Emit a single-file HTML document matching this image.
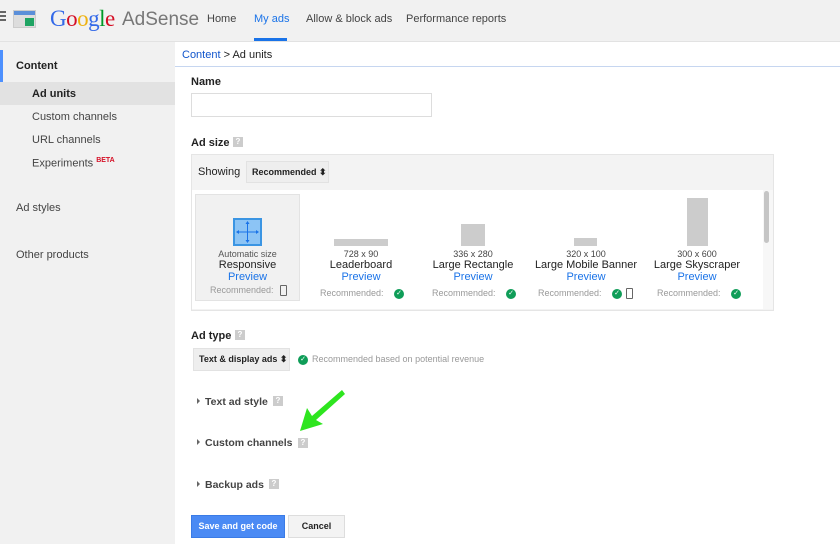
<!DOCTYPE html>
<html><head><style>
*{margin:0;padding:0;box-sizing:border-box}
body{width:840px;height:544px;overflow:hidden;font-family:"Liberation Sans",Arial,sans-serif;background:#f1f1f1;position:relative;font-size:11px;color:#222}
.a{position:absolute}
.blue{color:#1155cc}
.q{position:absolute;width:10px;height:10px;background:#ccc;color:#fff;font-size:8px;text-align:center;line-height:10px;font-weight:bold}
.cell{position:absolute;top:0;width:108px;text-align:center}
.cell .sz{font-size:9px;color:#444}
.cell .nm{font-size:11px;color:#222;line-height:12px}
.cell .pv{font-size:11px;color:#1a73e8;line-height:12px}
.rec{position:absolute;font-size:9px;color:#999}
.chk{display:inline-block;width:10px;height:10px;border-radius:50%;background:#0f9d58;color:#fff;font-size:7px;line-height:10px;text-align:center;vertical-align:middle;margin-left:8px}
.ph{display:inline-block;width:7px;height:11px;border:1px solid #666;border-radius:1px;vertical-align:middle;margin-left:4px}
.gr{position:absolute;background:#ccc}
.sec{position:absolute;left:197px;font-size:10.5px;font-weight:bold;color:#444}
.sec:before{content:"";display:inline-block;border-left:3px solid #666;border-top:3px solid transparent;border-bottom:3px solid transparent;margin-right:5px;vertical-align:1px}
</style></head><body>
<div class="a" style="left:0;top:11px;width:6px;height:2px;background:#666;box-shadow:0 4px #666,0 8px #666"></div>
<div class="a" style="left:13px;top:10px;width:23px;height:18px;background:#ddd;border:1px solid #ccc">
<div class="a" style="left:0;top:0;width:21px;height:4px;background:#5b8fd9"></div>
<div class="a" style="right:1px;bottom:1px;width:9px;height:8px;background:#1fa463"></div></div>
<div class="a" style="left:50px;top:6px;font-size:23px;font-family:'Liberation Serif',serif;letter-spacing:-0.5px"><span style="color:#3369e8">G</span><span style="color:#d50f25">o</span><span style="color:#eeb211">o</span><span style="color:#3369e8">g</span><span style="color:#009925">l</span><span style="color:#d50f25">e</span></div>
<div class="a" style="left:122px;top:9px;font-size:19px;color:#777">AdSense</div>
<div class="a" style="left:207px;top:13px;font-size:11px;color:#444">Home</div>
<div class="a" style="left:254px;top:13px;font-size:11px;color:#1a73e8">My ads</div>
<div class="a" style="left:254px;top:38px;width:33px;height:3px;background:#1a73e8"></div>
<div class="a" style="left:306px;top:13px;font-size:11px;color:#444">Allow &amp; block ads</div>
<div class="a" style="left:406px;top:13px;font-size:11px;color:#444">Performance reports</div>
<div class="a" style="left:0;top:41px;width:840px;height:1px;background:#e2e2e2"></div>
<div class="a" style="left:0;top:50px;width:3px;height:32px;background:#4d90fe"></div>
<div class="a" style="left:16px;top:60px;font-weight:bold;font-size:11px">Content</div>
<div class="a" style="left:0;top:82px;width:175px;height:23px;background:#e2e2e2"></div>
<div class="a" style="left:32px;top:88px;font-weight:bold;font-size:11px">Ad units</div>
<div class="a" style="left:32px;top:111px;color:#444">Custom channels</div>
<div class="a" style="left:32px;top:134px;color:#444">URL channels</div>
<div class="a" style="left:32px;top:157px;color:#444">Experiments <sup style="color:#d50f25;font-size:7px;font-weight:bold">BETA</sup></div>
<div class="a" style="left:16px;top:202px;color:#444">Ad styles</div>
<div class="a" style="left:16px;top:249px;color:#444">Other products</div>
<div class="a" style="left:175px;top:42px;width:665px;height:502px;background:#fff"></div>
<div class="a" style="left:175px;top:66px;width:665px;height:1px;background:#c6d6f0"></div>
<div class="a" style="left:182px;top:49px"><span class="blue">Content</span> &gt; Ad units</div>
<div class="a" style="left:191px;top:76px;font-weight:bold">Name</div>
<div class="a" style="left:191px;top:93px;width:241px;height:24px;border:1px solid #ddd"></div>
<div class="a" style="left:191px;top:137px;font-weight:bold">Ad size</div><div class="q" style="left:233px;top:137px">?</div>
<div class="a" style="left:191px;top:154px;width:583px;height:157px;background:#f3f3f3;border:1px solid #e5e5e5"></div>
<div class="a" style="left:198px;top:166px">Showing</div>
<div class="a" style="left:246px;top:161px;width:83px;height:22px;background:#eee;border:1px solid #e2e2e2;font-size:9px;font-weight:bold;line-height:20px;padding-left:5px">Recommended ⬍</div>
<div class="a" style="left:192px;top:190px;width:571px;height:119px;background:#fff"></div>
<div class="a" style="left:763px;top:190px;width:10px;height:119px;background:#f7f7f7"></div>
<div class="a" style="left:764px;top:191px;width:5px;height:52px;background:#c5c5c5;border-radius:3px"></div>
<div class="a" style="left:195px;top:194px;width:105px;height:107px;background:#f1f1f1;border:1px solid #e3e3e3"></div>
<div class="a" style="left:233px;top:218px;width:29px;height:28px;background:#8cc4f5;border:2px solid #3b95e3"><svg width="25" height="24" viewBox="0 0 25 24" style="position:absolute;left:0;top:0"><path d="M12.5 2v20M2 12h21" stroke="#1a73e8" stroke-width="1" fill="none"/><path d="M12.5 1l-2 3h4zM12.5 23l-2-3h4zM1 12l3-2v4zM24 12l-3-2v4z" fill="#1a73e8"/></svg></div>
<div class="cell" style="left:194px;top:249px;width:107px"><div class="sz" style="color:#555">Automatic size</div><div class="nm">Responsive</div><div class="pv">Preview</div></div>
<div class="rec" style="left:210px;top:285px">Recommended: <span class="ph"></span></div>
<div class="gr" style="left:334px;top:239px;width:54px;height:7px"></div>
<div class="gr" style="left:461px;top:224px;width:24px;height:22px"></div>
<div class="gr" style="left:574px;top:238px;width:23px;height:8px"></div>
<div class="gr" style="left:687px;top:198px;width:21px;height:48px"></div>
<div class="cell" style="left:307px;top:249px"><div class="sz">728 x 90</div><div class="nm">Leaderboard</div><div class="pv">Preview</div></div>
<div class="cell" style="left:419px;top:249px"><div class="sz">336 x 280</div><div class="nm">Large Rectangle</div><div class="pv">Preview</div></div>
<div class="cell" style="left:531px;top:249px;width:110px"><div class="sz">320 x 100</div><div class="nm">Large Mobile Banner</div><div class="pv">Preview</div></div>
<div class="cell" style="left:643px;top:249px"><div class="sz">300 x 600</div><div class="nm">Large Skyscraper</div><div class="pv">Preview</div></div>
<div class="rec" style="left:320px;top:288px">Recommended: <span class="chk">✓</span></div>
<div class="rec" style="left:432px;top:288px">Recommended: <span class="chk">✓</span></div>
<div class="rec" style="left:538px;top:288px">Recommended: <span class="chk">✓</span><span class="ph"></span></div>
<div class="rec" style="left:657px;top:288px">Recommended: <span class="chk">✓</span></div>
<div class="a" style="left:191px;top:330px;font-weight:bold">Ad type</div><div class="q" style="left:235px;top:330px">?</div>
<div class="a" style="left:193px;top:348px;width:97px;height:23px;background:#eee;border:1px solid #e2e2e2;font-size:9px;font-weight:bold;line-height:21px;padding-left:5px">Text &amp; display ads ⬍</div>
<div class="a" style="left:298px;top:354px;font-size:9px;color:#999"><span class="chk" style="margin:0 4px 0 0">✓</span>Recommended based on potential revenue</div>
<div class="sec" style="top:396px">Text ad style</div><div class="q" style="left:273px;top:396px">?</div>
<div class="sec" style="top:437px">Custom channels</div><div class="q" style="left:298px;top:438px">?</div>
<div class="sec" style="top:479px">Backup ads</div><div class="q" style="left:269px;top:479px">?</div>
<svg class="a" style="left:296px;top:388px" width="50" height="46" viewBox="0 0 50 46"><path d="M46 2 L16 28 L11 20 L4 43 L27 36 L20 32 L49 6 Z" fill="#2ee51f"/></svg>
<div class="a" style="left:191px;top:515px;width:94px;height:23px;background:#4a8af4;border:1px solid #3a7be6;color:#fff;font-weight:bold;font-size:9px;text-align:center;line-height:21px">Save and get code</div>
<div class="a" style="left:288px;top:515px;width:57px;height:23px;background:#f3f3f3;border:1px solid #ddd;font-weight:bold;font-size:9px;text-align:center;line-height:21px">Cancel</div>
</body></html>
